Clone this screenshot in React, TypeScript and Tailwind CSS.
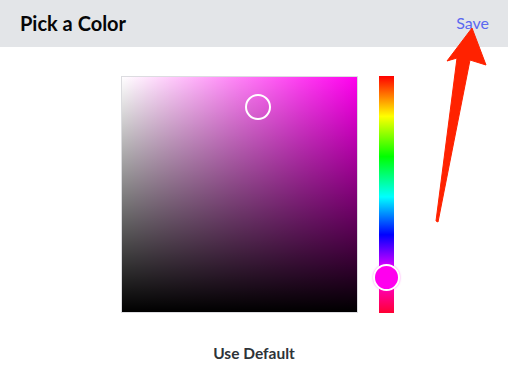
import React from 'react';

const App = () => {
    return (
        <div
            className="relative w-[508px] h-[367px] bg-white overflow-hidden"
            style={{ fontFamily: 'Lato, "Noto Sans", sans-serif' }}
        >
            {/* header */}
            <div className="h-[47px] bg-[#e3e5e8] flex items-center justify-between pl-[20px] pr-[19px]">
                <h1 className="text-[20px] font-bold text-[#060607] leading-none pb-[2px]">Pick a Color</h1>
                <button className="text-[16px] text-[#5b68f0] leading-none pb-[2px]">Save</button>
            </div>

            {/* picker */}
            <div className="flex justify-center gap-[21px] pt-[29px] pl-[7px]">
                <div className="relative w-[237px] h-[237px] bg-[#ff00ee] border border-[#dcdce0]">
                    <div className="absolute inset-0 bg-[linear-gradient(to_right,#ffffff,rgba(255,255,255,0))]" />
                    <div className="absolute inset-0 bg-[linear-gradient(to_top,#000000,rgba(0,0,0,0))]" />
                    <div className="absolute left-[123px] top-[17px] w-[26px] h-[26px] rounded-full border-[2.5px] border-white" />
                </div>
                <div className="relative w-[15px] h-[237px] bg-[linear-gradient(to_bottom,#ff0000_0%,#ffff00_17%,#00ff00_34%,#00ffff_51%,#0000ff_67%,#ff00ff_83%,#ff0033_100%)]">
                    <div className="absolute left-[-6px] top-[188px] w-[27px] h-[27px] rounded-full bg-[#ff00ee] border-[2.5px] border-white shadow-[0_0_2px_rgba(255,0,238,0.5)]" />
                </div>
            </div>

            <div className="mt-[29px] text-center text-[15.5px] font-bold text-[#2e3338]">Use Default</div>

            {/* annotation arrow */}
            <svg className="absolute inset-0 pointer-events-none" width="508" height="367" viewBox="0 0 508 367">
                <polygon
                    points="472,28 486,65 470,60 438,222 436,221 457,58 447,61"
                    fill="#ff2200"
                    stroke="#ff2200"
                    strokeWidth="1"
                    strokeLinejoin="round"
                />
            </svg>
        </div>
    );
};

export default App;
